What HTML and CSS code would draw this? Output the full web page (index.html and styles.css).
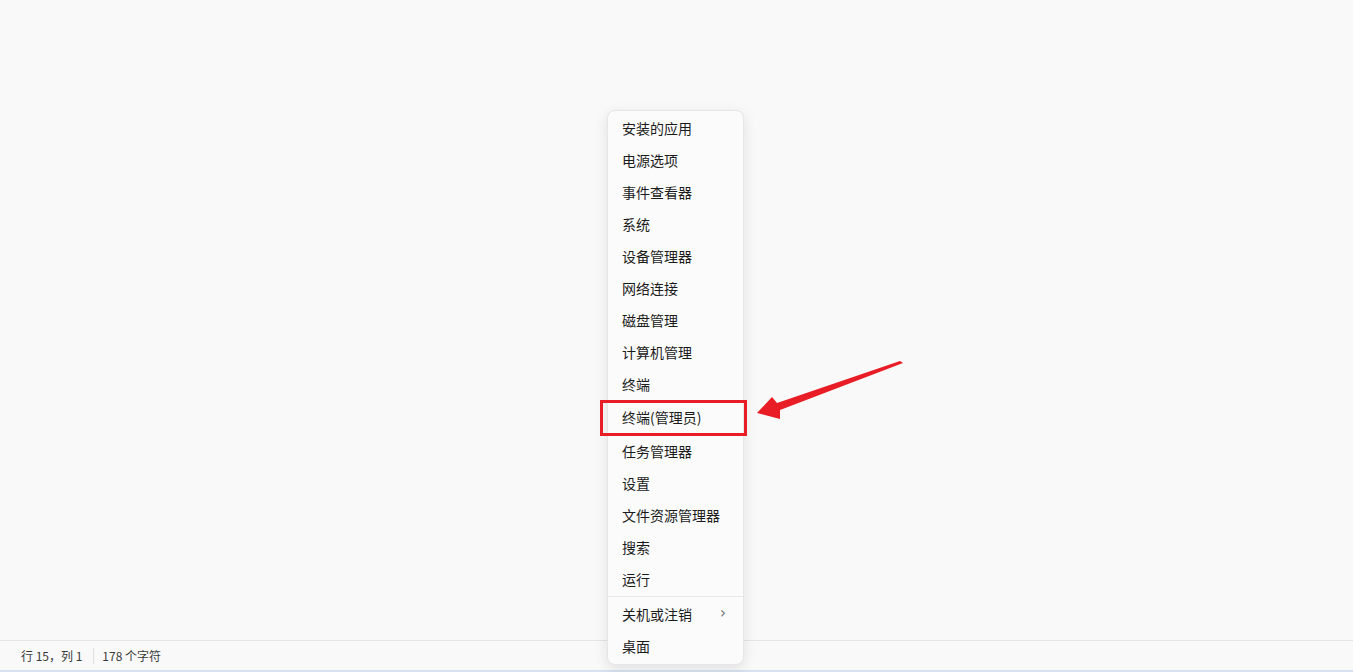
FILE: index.html
```html
<!DOCTYPE html>
<html lang="zh-CN">
<head>
<meta charset="utf-8">
<title>快速链接菜单</title>
<link rel="stylesheet" href="styles.css">
</head>
<body>
<div class="editor"></div>

<ul class="menu">
  <li class="item">安装的应用</li>
  <li class="item">电源选项</li>
  <li class="item">事件查看器</li>
  <li class="item">系统</li>
  <li class="item">设备管理器</li>
  <li class="item">网络连接</li>
  <li class="item">磁盘管理</li>
  <li class="item">计算机管理</li>
  <li class="item">终端</li>
  <li class="item marked">终端(管理员)</li>
  <li class="item">任务管理器</li>
  <li class="item">设置</li>
  <li class="item">文件资源管理器</li>
  <li class="item">搜索</li>
  <li class="item">运行</li>
  <li class="sep"></li>
  <li class="item sub">关机或注销<span class="chev">&#x203A;</span></li>
  <li class="item">桌面</li>
</ul>

<svg class="arrow" width="160" height="70" viewBox="750 355 160 70">
  <polygon fill="#e81d26" points="757,413 772,397 777,403 900,361 903,363 780,410 780,419"/>
</svg>

<div class="status">
  <span class="cell">行 15，列 1</span>
  <span class="cell">178 个字符</span>
</div>
<div class="strip"></div>
</body>
</html>
```

FILE: styles.css
```css
html, body {
  margin: 0;
  height: 100%;
}
body {
  background: #f9f9f9;
  color: #1b1b1b;
  font-family: "Noto Sans CJK SC", "Noto Sans", sans-serif;
  display: flex;
  flex-direction: column;
  overflow: hidden;
}
.editor {
  flex: 1;
}

.menu {
  position: absolute;
  left: 607px;
  top: 110px;
  width: 137px;
  box-sizing: border-box;
  margin: 0;
  padding: 1px 0 2px;
  list-style: none;
  background: #fbfbfb;
  border: 1px solid #e6e6e6;
  border-radius: 8px;
  box-shadow: 0 4px 14px rgba(0,0,0,0.10);
  z-index: 2;
}
.item {
  height: 32px;
  line-height: 32px;
  padding-left: 14px;
  font-size: 14px;
  white-space: nowrap;
  position: relative;
}
.item.marked {
  height: 35px;
  line-height: 35px;
}
.item.marked::before {
  content: "";
  position: absolute;
  left: -8px;
  right: -4px;
  top: 0;
  bottom: -1px;
  border: 3px solid #e81d26;
}
.sep {
  height: 1px;
  background: #e8e8e8;
  margin: 1px 0 1px;
}
.chev {
  position: absolute;
  right: 17px;
  top: -1px;
  font-size: 15px;
  font-family: "DejaVu Sans", sans-serif;
  color: #707070;
}

.arrow {
  position: absolute;
  left: 750px;
  top: 355px;
  z-index: 3;
}

.status {
  height: 29px;
  border-top: 1px solid #e5e5e5;
  display: flex;
  align-items: center;
  padding-left: 21px;
  font-size: 12px;
  color: #3a3a3a;
}
.cell + .cell {
  margin-left: 11px;
  padding-left: 8px;
  border-left: 1px solid #e0e0e0;
  line-height: 16px;
}
.strip {
  height: 2px;
  background: #d6e2ed;
}
```
